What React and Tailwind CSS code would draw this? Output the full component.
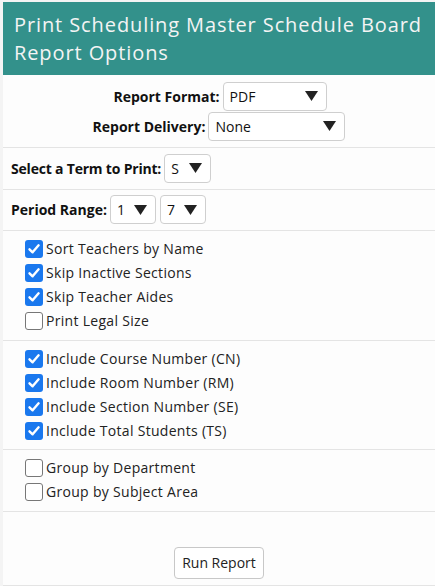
import React from "react";

const font = { fontFamily: '"Open Sans", "Liberation Sans", sans-serif' };

function Select({ value, className }) {
  return (
    <div
      className={`flex items-center justify-between h-[29px] bg-white border border-[#cfcfcf] rounded-[4px] pl-[6px] pr-[8px] text-[14px] text-[#111] ${className}`}
    >
      <span>{value}</span>
      <svg width="13" height="10" viewBox="0 0 13 10" className="shrink-0">
        <path d="M0 0 H13 L6.5 10 Z" fill="#222" />
      </svg>
    </div>
  );
}

function Check({ checked, label }) {
  return (
    <div className="flex items-center h-[24px]">
      {checked ? (
        <div className="w-[18px] h-[18px] rounded-[3px] bg-[#1a78ee] flex items-center justify-center">
          <svg width="14" height="14" viewBox="0 0 14 14">
            <path d="M2.5 7.3 L5.6 10.3 L11.6 3.3" fill="none" stroke="#fff" strokeWidth="2.4" strokeLinecap="round" strokeLinejoin="round" />
          </svg>
        </div>
      ) : (
        <div className="w-[18px] h-[18px] rounded-[3px] bg-white border border-[#777]" />
      )}
      <span className="ml-[3px] text-[14px] text-[#222] tracking-[0.3px]">{label}</span>
    </div>
  );
}

export default function App() {
  return (
    <div className="w-[435px] h-[586px] bg-[#f4f4f4] pl-[3px] pt-[2px] overflow-hidden" style={font}>
      <div className="bg-[#fdfdfd] h-full flex flex-col">
        <div className="bg-[#33918b] h-[74px] px-[11px] pt-[9px] text-[#f4f4f4] text-[20px] leading-[28px] tracking-[0.9px] whitespace-nowrap overflow-hidden">
          <div>Print Scheduling Master Schedule Board</div>
          <div>Report Options</div>
        </div>

        <div className="flex flex-col items-center pt-[7px] pb-[6px] gap-[1px] border-b border-[#e4e4e4]">
          <div className="flex items-center h-[29px] pl-[2px]">
            <span className="font-bold text-[14px] text-[#111] mr-[3px]">Report Format:</span>
            <Select value="PDF" className="w-[104px]" />
          </div>
          <div className="flex items-center h-[29px]">
            <span className="font-bold text-[14px] text-[#111] mr-[3px]">Report Delivery:</span>
            <Select value="None" className="w-[137px]" />
          </div>
        </div>

        <div className="flex items-center h-[43px] px-[8px] border-b border-[#e4e4e4]">
          <span className="font-bold text-[14px] text-[#111] mr-[3px] tracking-[-0.2px]">Select a Term to Print:</span>
          <Select value="S" className="w-[47px]" />
        </div>

        <div className="flex items-center h-[42px] px-[8px] border-b border-[#e4e4e4]">
          <span className="font-bold text-[14px] text-[#111] mr-[3px]">Period Range:</span>
          <Select value="1" className="w-[46px]" />
          <Select value="7" className="w-[46px] ml-[4px]" />
        </div>

        <div className="flex flex-col pl-[22px] pt-[6px] pb-[7px] border-b border-[#e4e4e4]">
          <Check checked label="Sort Teachers by Name" />
          <Check checked label="Skip Inactive Sections" />
          <Check checked label="Skip Teacher Aides" />
          <Check label="Print Legal Size" />
        </div>

        <div className="flex flex-col pl-[22px] pt-[6px] pb-[6px] border-b border-[#e4e4e4]">
          <Check checked label="Include Course Number (CN)" />
          <Check checked label="Include Room Number (RM)" />
          <Check checked label="Include Section Number (SE)" />
          <Check checked label="Include Total Students (TS)" />
        </div>

        <div className="flex flex-col pl-[22px] pt-[6px] pb-[7px] border-b border-[#e4e4e4]">
          <Check label="Group by Department" />
          <Check label="Group by Subject Area" />
        </div>

        <div className="flex justify-center pt-[35px] h-[75px] border-b border-[#e4e4e4]">
          <button className="h-[32px] px-[7px] bg-white border border-[#c8c8c8] rounded-[4px] text-[14px] text-[#222]">
            Run Report
          </button>
        </div>
      </div>
    </div>
  );
}
